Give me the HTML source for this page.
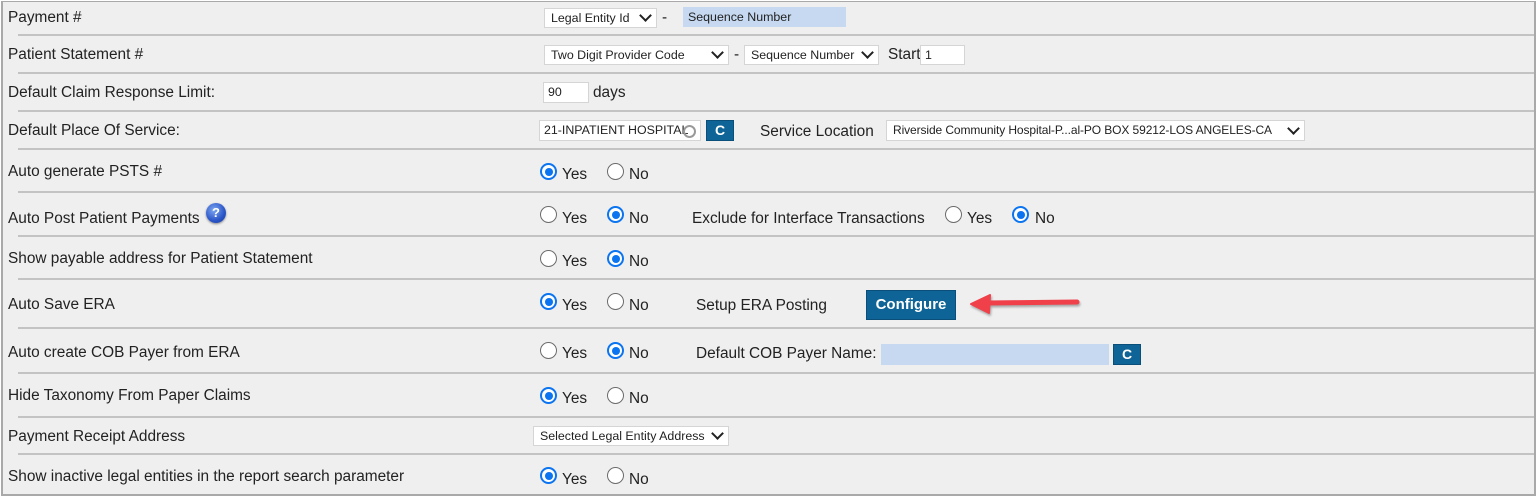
<!DOCTYPE html>
<html><head><style>
body{margin:0;width:1536px;height:497px;background:#fff;position:relative;overflow:hidden;font-family:"Liberation Sans",Arial,sans-serif;color:#222}
#frame{position:absolute;left:1px;top:1px;width:1531px;height:492px;background:#efefef;border:2px solid #a9a9a9;border-top-width:1px}
.l{position:absolute;left:15px;right:0;height:2px;background:#c3c3c3}
.t{position:absolute;font-size:15.4px;line-height:18px;white-space:nowrap}
.s{position:absolute;background:#fff;border:1px solid #d5d5d5;font-size:12.4px;line-height:18px;padding-left:6px;box-sizing:border-box;white-space:nowrap;color:#222}
.s .c{position:absolute;right:6px;top:2px;width:7px;height:7px;border-right:2px solid #222;border-bottom:2px solid #222;transform:rotate(45deg)}
.in{position:absolute;background:#fff;border:1px solid #d5d5d5;font-size:12.4px;line-height:19px;padding-left:4px;box-sizing:border-box}
.blue{background:#c6d9f1;border-color:#c6d9f1}
.r{position:absolute;width:17px;height:17px;border-radius:50%;box-sizing:border-box;border:1px solid #6b6b6b;background:#fff}
.r.on{border:2px solid #0b74f0}
.r.on:after{content:"";position:absolute;left:2.5px;top:2.5px;width:8px;height:8px;border-radius:50%;background:#0b74f0}
.btn{position:absolute;background:#0e6496;color:#fff;font-weight:bold;text-align:center;border:1px solid #0a4f7a;box-sizing:border-box}
</style></head><body>
<div id="frame">
<div class="l" style="top:32px"></div>
<div class="l" style="top:70px"></div>
<div class="l" style="top:108px"></div>
<div class="l" style="top:146px"></div>
<div class="l" style="top:189px"></div>
<div class="l" style="top:233px"></div>
<div class="l" style="top:276px"></div>
<div class="l" style="top:325px"></div>
<div class="l" style="top:370px"></div>
<div class="l" style="top:414px"></div>
<div class="l" style="top:451px"></div>
</div>

<div class="t" style="left:8px;top:9px">Payment #</div>
<div class="s" style="left:544px;top:8px;width:113px;height:20px">Legal Entity Id<span class="c"></span></div>
<div class="t" style="left:662px;top:9px">-</div>
<div class="in blue" style="left:683px;top:7px;width:163px;height:20px">Sequence Number</div>

<div class="t" style="left:8px;top:46px">Patient Statement #</div>
<div class="s" style="left:544px;top:45px;width:185px;height:20px">Two Digit Provider Code<span class="c"></span></div>
<div class="t" style="left:734px;top:46px">-</div>
<div class="s" style="left:744px;top:45px;width:135px;height:20px">Sequence Number<span class="c"></span></div>
<div class="t" style="left:888px;top:46px">Start</div>
<div class="in" style="left:920px;top:45px;width:45px;height:20px">1</div>

<div class="t" style="left:8px;top:84px">Default Claim Response Limit:</div>
<div class="in" style="left:543px;top:82px;width:46px;height:21px">90</div>
<div class="t" style="left:593px;top:84px">days</div>

<div class="t" style="left:8px;top:122px">Default Place Of Service:</div>
<div class="in" style="left:539px;top:120px;width:162px;height:21px;overflow:hidden">21-INPATIENT HOSPITAL<span style="position:absolute;left:143px;top:4px;width:13px;height:13px;border-radius:50%;border:2px solid #9a9a9a;box-sizing:border-box"></span></div>
<div class="btn" style="left:706px;top:120px;width:28px;height:21px;font-size:14px;line-height:19px">C</div>
<div class="t" style="left:760px;top:123px">Service Location</div>
<div class="s" style="left:886px;top:120px;width:419px;height:21px;line-height:19px;font-size:12px;letter-spacing:-0.1px;overflow:hidden"><span style="display:inline-block;width:385px;overflow:hidden;vertical-align:top">Riverside Community Hospital-P...al-PO BOX 59212-LOS ANGELES-CA</span><span class="c" style="top:3px"></span></div>

<div class="t" style="left:8px;top:163px">Auto generate PSTS #</div>
<div class="r on" style="left:540px;top:163px"></div><div class="t" style="left:562px;top:166px">Yes</div>
<div class="r" style="left:607px;top:163px"></div><div class="t" style="left:629px;top:166px">No</div>

<div class="t" style="left:8px;top:210px">Auto Post Patient Payments</div>
<div style="position:absolute;left:206px;top:203px;width:20px;height:20px;border-radius:50%;background:radial-gradient(circle at 40% 35%,#7fa8f0,#2a55c8 60%,#1a3a9a);color:#fff;font:bold 13px/20px 'Liberation Sans',sans-serif;text-align:center;box-shadow:0 1px 2px #888">?</div>
<div class="r" style="left:540px;top:206px"></div><div class="t" style="left:562px;top:210px">Yes</div>
<div class="r on" style="left:607px;top:206px"></div><div class="t" style="left:629px;top:210px">No</div>
<div class="t" style="left:692px;top:210px">Exclude for Interface Transactions</div>
<div class="r" style="left:945px;top:206px"></div><div class="t" style="left:967px;top:210px">Yes</div>
<div class="r on" style="left:1012px;top:206px"></div><div class="t" style="left:1035px;top:210px">No</div>

<div class="t" style="left:8px;top:250px">Show payable address for Patient Statement</div>
<div class="r" style="left:540px;top:250px"></div><div class="t" style="left:562px;top:253px">Yes</div>
<div class="r on" style="left:607px;top:250px"></div><div class="t" style="left:629px;top:253px">No</div>

<div class="t" style="left:8px;top:296px">Auto Save ERA</div>
<div class="r on" style="left:540px;top:293px"></div><div class="t" style="left:562px;top:297px">Yes</div>
<div class="r" style="left:607px;top:293px"></div><div class="t" style="left:629px;top:297px">No</div>
<div class="t" style="left:696px;top:297px">Setup ERA Posting</div>
<div class="btn" style="left:866px;top:290px;width:90px;height:30px;font-size:15px;line-height:28px">Configure</div>
<svg style="position:absolute;left:960px;top:290px" width="130" height="30"><g fill="#f0404a" stroke="#f0404a" stroke-linejoin="round" style="filter:drop-shadow(1px 2px 1px rgba(0,0,0,.3))"><path d="M27 13 L117 12" stroke-width="5" stroke-linecap="round" fill="none"/><path d="M11 14 L30 5 L29 23 Z" stroke-width="2"/></g></svg>

<div class="t" style="left:8px;top:344px">Auto create COB Payer from ERA</div>
<div class="r" style="left:540px;top:342px"></div><div class="t" style="left:562px;top:345px">Yes</div>
<div class="r on" style="left:607px;top:342px"></div><div class="t" style="left:629px;top:345px">No</div>
<div class="t" style="left:696px;top:345px">Default COB Payer Name:</div>
<div class="in blue" style="left:881px;top:344px;width:228px;height:21px"></div>
<div class="btn" style="left:1113px;top:344px;width:28px;height:21px;font-size:14px;line-height:19px">C</div>

<div class="t" style="left:8px;top:387px">Hide Taxonomy From Paper Claims</div>
<div class="r on" style="left:540px;top:387px"></div><div class="t" style="left:562px;top:390px">Yes</div>
<div class="r" style="left:607px;top:387px"></div><div class="t" style="left:629px;top:390px">No</div>

<div class="t" style="left:8px;top:428px">Payment Receipt Address</div>
<div class="s" style="left:533px;top:426px;width:196px;height:20px">Selected Legal Entity Address<span class="c"></span></div>

<div class="t" style="left:8px;top:468px">Show inactive legal entities in the report search parameter</div>
<div class="r on" style="left:540px;top:467px"></div><div class="t" style="left:562px;top:471px">Yes</div>
<div class="r" style="left:607px;top:467px"></div><div class="t" style="left:629px;top:471px">No</div>
</body></html>
